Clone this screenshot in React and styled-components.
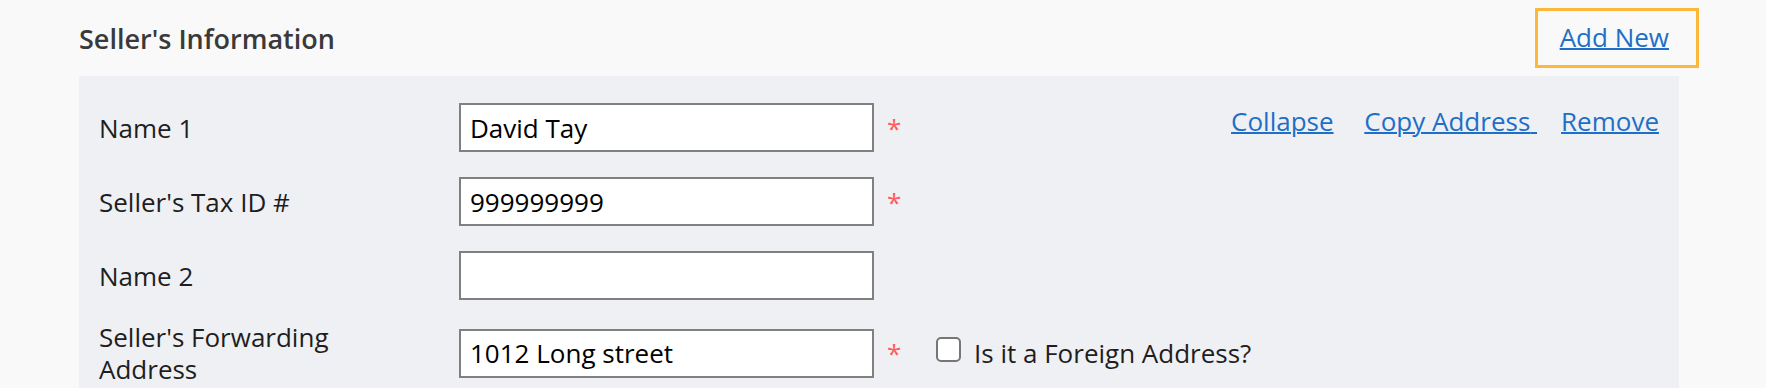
import React from "react";
import styled, { createGlobalStyle } from "styled-components";

const GlobalStyle = createGlobalStyle`
  html, body {
    margin: 0;
    padding: 0;
    background: #f9f9f9;
  }
  body {
    font-family: "Open Sans", "Noto Sans", sans-serif;
    color: #1e1e1e;
  }
`;

const Page = styled.div`
  width: 1600px;
  padding: 8px 0 0 79px;
`;

const Header = styled.header`
  display: flex;
  align-items: center;
  justify-content: space-between;
  height: 60px;
  margin-right: -20px;
  margin-bottom: 8px;
`;

const Title = styled.h2`
  margin: 0;
  font-size: 27px;
  font-weight: 600;
  line-height: normal;
  color: #3a3a3a;
`;

const AddNew = styled.a`
  display: inline-block;
  border: 3px solid #fdb83a;
  padding: 8px 27px 10px 22px;
  font-size: 26px;
  line-height: normal;
  color: #1d6fc7;
  text-decoration: underline;
  text-decoration-thickness: 2px;
  cursor: pointer;
`;

const Panel = styled.section`
  display: flex;
  align-items: flex-start;
  background: #eff0f4;
  padding: 27px 20px;
`;

const Form = styled.div`
  display: flex;
  flex: 1;
  min-width: 0;
  flex-direction: column;
  gap: 25px;
`;

const Row = styled.div`
  display: flex;
  align-items: center;
`;

const Label = styled.label`
  box-sizing: border-box;
  width: 360px;
  padding-right: 60px;
  flex: none;
  font-size: 26px;
  line-height: 32px;
  margin: -4px 0;
  color: #1e1e1e;
`;

const Input = styled.input`
  box-sizing: border-box;
  flex: none;
  width: 415px;
  height: 49px;
  border: 2px solid #808080;
  border-radius: 0;
  background: #ffffff;
  padding: 0 9px;
  font-family: "Open Sans", "Noto Sans", sans-serif;
  font-size: 26px;
  color: #000000;
  outline: none;
`;

const Required = styled.span`
  box-sizing: border-box;
  flex: none;
  width: 62px;
  padding-left: 13px;
  font-size: 26px;
  line-height: normal;
  color: #ff5c5c;
`;

const CheckLabel = styled.label`
  display: flex;
  flex: none;
  align-items: center;
  gap: 13px;
  font-size: 26px;
  line-height: normal;
  white-space: nowrap;
  color: #1e1e1e;
`;

const Checkbox = styled.input.attrs({ type: "checkbox" })`
  appearance: none;
  box-sizing: border-box;
  flex: none;
  width: 25px;
  height: 25px;
  margin: 0 0 7px 0;
  border: 2px solid #767676;
  border-radius: 5px;
  background: #ffffff;
`;

const Links = styled.div`
  flex: none;
  margin-left: auto;
  font-size: 26px;
  line-height: normal;
  white-space: nowrap;
`;

const Link = styled.a`
  color: #1d6fc7;
  text-decoration: underline;
  text-decoration-thickness: 2px;
  cursor: pointer;
  & + & {
    margin-left: 24px;
  }
`;

const fields = [
  { label: "Name 1", value: "David Tay", required: true },
  { label: "Seller's Tax ID #", value: "999999999", required: true },
  { label: "Name 2", value: "", required: false },
  {
    label: "Seller's Forwarding Address",
    value: "1012 Long street",
    required: true,
    foreign: true,
  },
];

export default function App() {
  return (
    <>
      <GlobalStyle />
      <Page>
        <Header>
          <Title>Seller's Information</Title>
          <AddNew>Add New</AddNew>
        </Header>
        <Panel>
          <Form>
            {fields.map((f) => (
              <Row key={f.label}>
                <Label>{f.label}</Label>
                <Input defaultValue={f.value} />
                {f.required && <Required>*</Required>}
                {f.foreign && (
                  <CheckLabel>
                    <Checkbox />
                    Is it a Foreign Address?
                  </CheckLabel>
                )}
              </Row>
            ))}
          </Form>
          <Links>
            <Link>Collapse</Link>{" "}
            <Link>Copy Address{"\u00a0"}</Link>
            <Link>Remove</Link>
          </Links>
        </Panel>
      </Page>
    </>
  );
}
